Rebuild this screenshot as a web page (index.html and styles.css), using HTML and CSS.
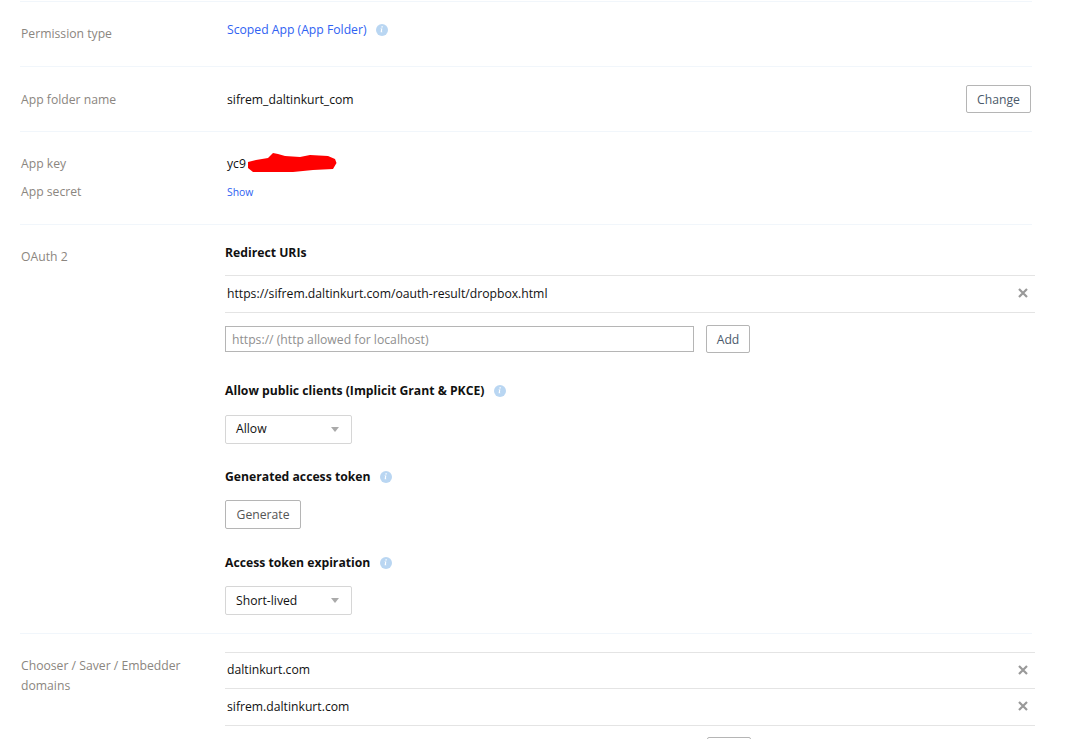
FILE: index.html
```html
<!DOCTYPE html>
<html lang="en">
<head>
<meta charset="utf-8">
<title>App settings</title>
<link rel="stylesheet" href="styles.css">
</head>
<body>
<main class="page">
  <section class="row row-permission">
    <div class="label">Permission type</div>
    <div class="value value-permission">
      <a class="link">Scoped App (App Folder)</a>
      <svg class="info" viewBox="0 0 12 12"><circle cx="6" cy="6" r="6"/><path d="M6.9 2.2h-1.4l-.2 1.3h1.4zM6.3 4.5H4.6l-.1.6h.6l-.5 3.2h1.7l.1-.6h-.5z"/></svg>
    </div>
  </section>
  <section class="row row-folder">
    <div class="label">App folder name</div>
    <div class="value grow">sifrem_daltinkurt_com</div>
    <button class="btn btn-change">Change</button>
  </section>
  <section class="row row-keys">
    <div class="label-stack">
      <div class="label">App key</div>
      <div class="label">App secret</div>
    </div>
    <div class="value-stack">
      <div class="value key">yc9
        <svg class="scribble" viewBox="0 0 89 20"><path d="M0 9 8 7 20 5 23 2 25 0 30 1 37 3 52 4 62 2 80 3 87 6 88.5 10 85 16 65 17 45 19 5 19 0 15z"/></svg>
      </div>
      <div class="value"><a class="link link-small">Show</a></div>
    </div>
  </section>
  <section class="row row-oauth">
    <div class="label label-oauth">OAuth 2</div>
    <div class="oauth">
      <h3 class="heading">Redirect URIs</h3>
      <div class="item item-first">
        <span>https://sifrem.daltinkurt.com/oauth-result/dropbox.html</span>
        <svg class="remove" viewBox="0 0 10 10"><path d="M1 1l8 8M9 1l-8 8"/></svg>
      </div>
      <div class="add-row">
        <input class="text-input" type="text" placeholder="https:// (http allowed for localhost)">
        <button class="btn btn-add">Add</button>
      </div>
      <h3 class="heading heading-public">Allow public clients (Implicit Grant &amp; PKCE)
        <svg class="info" viewBox="0 0 12 12"><circle cx="6" cy="6" r="6"/><path d="M6.9 2.2h-1.4l-.2 1.3h1.4zM6.3 4.5H4.6l-.1.6h.6l-.5 3.2h1.7l.1-.6h-.5z"/></svg>
      </h3>
      <div class="select"><span>Allow</span><i class="caret"></i></div>
      <h3 class="heading heading-token">Generated access token
        <svg class="info" viewBox="0 0 12 12"><circle cx="6" cy="6" r="6"/><path d="M6.9 2.2h-1.4l-.2 1.3h1.4zM6.3 4.5H4.6l-.1.6h.6l-.5 3.2h1.7l.1-.6h-.5z"/></svg>
      </h3>
      <button class="btn btn-generate">Generate</button>
      <h3 class="heading heading-expiry">Access token expiration
        <svg class="info" viewBox="0 0 12 12"><circle cx="6" cy="6" r="6"/><path d="M6.9 2.2h-1.4l-.2 1.3h1.4zM6.3 4.5H4.6l-.1.6h.6l-.5 3.2h1.7l.1-.6h-.5z"/></svg>
      </h3>
      <div class="select select-expiry"><span>Short-lived</span><i class="caret"></i></div>
    </div>
  </section>
  <section class="row row-domains">
    <div class="label label-domains">Chooser / Saver / Embedder domains</div>
    <div class="oauth">
      <div class="item item-first item-domain">
        <span>daltinkurt.com</span>
        <svg class="remove" viewBox="0 0 10 10"><path d="M1 1l8 8M9 1l-8 8"/></svg>
      </div>
      <div class="item item-domain">
        <span>sifrem.daltinkurt.com</span>
        <svg class="remove" viewBox="0 0 10 10"><path d="M1 1l8 8M9 1l-8 8"/></svg>
      </div>
      <div class="add-row add-row-last">
        <button class="btn btn-add" aria-label="Add"></button>
      </div>
    </div>
  </section>
</main>
</body>
</html>
```
FILE: styles.css
```css
* { box-sizing: border-box; }
html, body { margin: 0; padding: 0; height: 739px; overflow: hidden; background: #fff; }
body { font-family: "Open Sans", sans-serif; font-size: 12.2px; color: #111; }
.page { width: 1012px; margin: 1px 0 0 20px; border-top: 1px solid #f1f6fb; }
.row { display: flex; border-bottom: 1px solid #f1f6fb; }
.label { width: 207px; flex: none; padding-left: 1px; color: #8b8680; line-height: 20px; }
.value { line-height: 20px; }
.grow { flex: 1; }
.row-permission { height: 65px; padding-top: 22px; }
.value-permission { display: flex; align-items: flex-start; margin-top: -4px; }
.link { color: #2f62f2; }
.link-small { font-size: 10.4px; }
.info { width: 12px; height: 12px; flex: none; }
.info circle { fill: #b9d6f2; }
.info path { fill: #fff; }
.value-permission .info { margin: 4px 0 0 9px; }
.row-folder { height: 65px; padding-top: 23px; }
.btn { font-family: inherit; font-size: 12.2px; font-weight: 500; background: #fff; color: #4b5a6b; border: 1px solid #b5b5b5; border-radius: 2px; padding: 0; height: 28px; }
.btn-change { width: 65px; margin: -5px 1px 0 0; }
.row-keys { height: 93px; padding-top: 22px; }
.label-stack .label + .label, .value-stack .value + .value { margin-top: 8px; }
.key { position: relative; }
.scribble { position: absolute; left: 21px; top: -1px; width: 89px; height: 20px; }
.scribble path { fill: #f00; }
.row-oauth { height: 409px; padding-top: 19px; }
.label-oauth { padding-top: 3px; }
.oauth { width: 810px; flex: none; margin-left: -2px; }
.heading { margin: 0; font-size: 12.2px; font-weight: 700; color: #111; line-height: 18px; display: flex; align-items: center; }
.heading .info { margin-left: 10px; }
.item { display: flex; justify-content: space-between; align-items: center; height: 37px; padding: 0 7px 2px 2px; border-bottom: 1px solid #e4e4e4; }
.item-first { border-top: 1px solid #e4e4e4; height: 38px; margin-top: 13px; }
.remove { width: 10px; height: 10px; fill: none; stroke: #999; stroke-width: 2.2; }
.add-row { display: flex; gap: 12px; margin-top: 12px; align-items: center; }
.text-input { width: 469px; height: 26px; border: 1px solid #b5b5b5; padding: 0 6px; font: inherit; }
.text-input::placeholder { color: #8f8f8f; opacity: 1; }
.btn-add { width: 44px; }
.heading-public { margin-top: 29px; }
.select { margin-top: 15px; width: 127px; height: 29px; border: 1px solid #d6d6d6; border-radius: 2px; padding: 0 10px 2px; display: flex; justify-content: space-between; align-items: center; }
.select-expiry { margin-top: 14px; padding-bottom: 0; }
.caret { width: 0; height: 0; border-left: 4.5px solid transparent; border-right: 4.5px solid transparent; border-top: 5px solid #aaa; margin: 2px 2px 0 0; }
.select-expiry .caret { margin-top: 0; }
.heading-token { margin-top: 24px; }
.btn-generate { display: block; width: 76px; height: 29px; margin-top: 14px; color: #555; }
.heading-expiry { margin-top: 25px; }
.row-domains { height: 105px; padding-top: 18px; border-bottom: 0; overflow: hidden; margin-right: -3px; }
.label-domains { line-height: 20px; padding-top: 4px; padding-right: 20px; }
.item-domain.item-first { margin-top: 0; height: 37px; }
.add-row-last { margin-top: 11px; padding-left: 482px; }
```
